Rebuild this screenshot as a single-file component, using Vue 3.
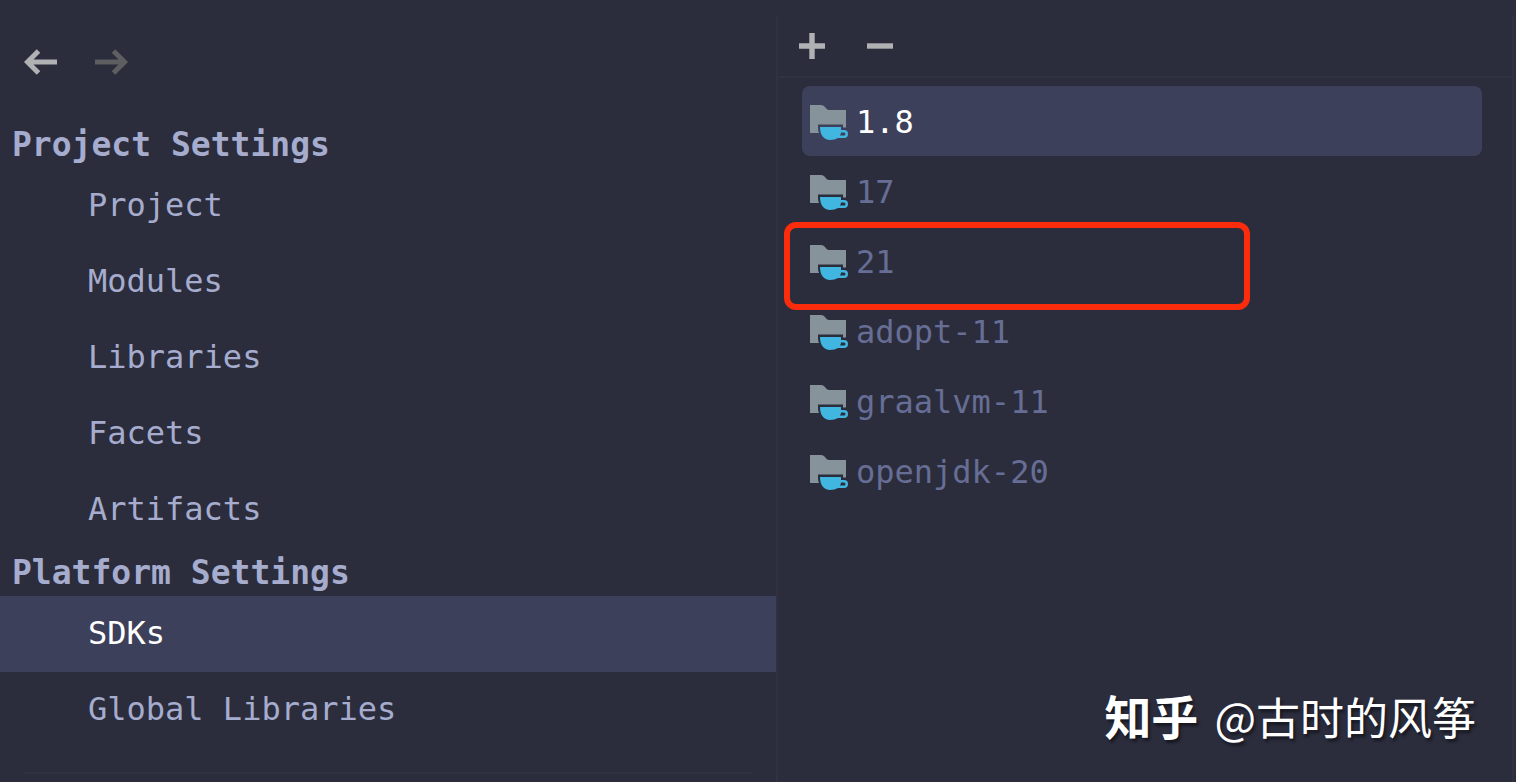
<template>
  <div class="structure-dialog">
    <aside class="sidebar">
      <div class="history">
        <button type="button" class="icon-btn" aria-label="Back">
          <svg width="34" height="26" viewBox="0 0 34 26">
            <path d="M14.5 2 L3.5 13 L14.5 24 M4 13 H33" fill="none" stroke="#afb1b3" stroke-width="5" />
          </svg>
        </button>
        <button type="button" class="icon-btn" aria-label="Forward" disabled>
          <svg width="34" height="26" viewBox="0 0 34 26">
            <path d="M19.5 2 L30.5 13 L19.5 24 M30 13 H1" fill="none" stroke="#5d5e60" stroke-width="5" />
          </svg>
        </button>
      </div>

      <nav class="sections">
        <div v-for="section in sections" :key="section.title" class="section">
          <h2 class="section-title">{{ section.title }}</h2>
          <a
            v-for="item in section.items"
            :key="item"
            href="#"
            class="nav-item"
            :class="{ active: activeItem === item }"
            @click.prevent="activeItem = item"
          >{{ item }}</a>
        </div>
      </nav>

      <div class="sidebar-footer"></div>
    </aside>

    <main class="content">
      <div class="toolbar">
        <button type="button" class="icon-btn" aria-label="Add">
          <svg width="26" height="26" viewBox="0 0 26 26">
            <path d="M0 13 H26 M13 0 V26" stroke="#afb1b3" stroke-width="5.4" />
          </svg>
        </button>
        <button type="button" class="icon-btn" aria-label="Remove">
          <svg width="26" height="26" viewBox="0 0 26 26">
            <path d="M0 13 H26" stroke="#afb1b3" stroke-width="5.4" />
          </svg>
        </button>
      </div>

      <ul class="sdk-list">
        <li v-for="sdk in sdks" :key="sdk" class="sdk-row">
          <button
            type="button"
            class="sdk-btn"
            :class="{ active: activeSdk === sdk }"
            @click="activeSdk = sdk"
          >
            <svg class="sdk-icon" width="40" height="36" viewBox="0 0 40 36">
              <path d="M2 1 H13 C17 1 18 6 21 6 H38 V23.5 H35 V20.5 H10 V24 Q10 27 11 29 H2 Z" fill="#87939a" />
              <path
                d="M12 23 H33 V26 H36 Q40 26 40 30 Q40 34 36 34 H30 Q27 36 22 36 C16 36 12 31 12 23 Z M33 28.5 Q33 30 32 31.5 H36 Q37.5 31.5 37.5 30 Q37.5 28.5 36 28.5 Z"
                fill="#40b6e0"
                fill-rule="evenodd"
              />
            </svg>
            <span>{{ sdk }}</span>
          </button>
          <span v-if="sdk === markedSdk" class="mark"></span>
        </li>
      </ul>
    </main>

    <div class="watermark">
      <span class="watermark-brand">知乎</span>
      <span>@古时的风筝</span>
    </div>
  </div>
</template>

<script setup>
import { ref } from 'vue'

const sections = [
  {
    title: 'Project Settings',
    items: ['Project', 'Modules', 'Libraries', 'Facets', 'Artifacts']
  },
  {
    title: 'Platform Settings',
    items: ['SDKs', 'Global Libraries']
  }
]

const sdks = ['1.8', '17', '21', 'adopt-11', 'graalvm-11', 'openjdk-20']

const activeItem = ref('SDKs')
const activeSdk = ref('1.8')

// SDK outlined in red
const markedSdk = '21'
</script>

<style>
body {
  margin: 0;
  background: #2b2d3d;
}
</style>

<style scoped>
.structure-dialog {
  position: relative;
  display: grid;
  grid-template-columns: 776fr 740fr;
  min-height: 100vh;
  box-sizing: border-box;
  padding-top: 16px;
  background: #2b2d3d;
  color: #a6accd;
  font-family: "DejaVu Sans Mono", monospace;
  font-size: 32px;
  line-height: 40px;
}

.sidebar {
  display: flex;
  flex-direction: column;
  min-width: 0;
}

.history {
  display: flex;
  align-items: center;
  gap: 36px;
  height: 92px;
  padding: 0 24px;
  margin-bottom: 12px;
}

.icon-btn {
  display: flex;
  padding: 0;
  border: none;
  background: none;
  cursor: pointer;
}

.icon-btn:disabled {
  cursor: default;
}

.section-title {
  margin: 0;
  padding: 2px 12px 0;
  font-size: 33px;
  font-weight: 700;
  line-height: 46px;
}

.nav-item {
  display: block;
  padding: 0 88px 2px;
  line-height: 74px;
  color: inherit;
  text-decoration: none;
}

.nav-item.active {
  background: #3d405a;
  color: #fff;
}

.sidebar-footer {
  height: 8px;
  margin: auto 24px 0;
  border-top: 2px solid #303244;
}

.content {
  min-width: 0;
  margin-right: 2px;
  border-left: 2px solid #303244;
  border-right: 2px solid #303244;
}

.toolbar {
  display: flex;
  align-items: center;
  gap: 42px;
  height: 60px;
  padding: 0 21px;
  border-bottom: 2px solid #303244;
}

.sdk-list {
  margin: 0;
  padding: 8px 30px 0 24px;
  list-style: none;
}

.sdk-row {
  position: relative;
}

.sdk-btn {
  display: flex;
  align-items: center;
  gap: 8px;
  width: 100%;
  height: 70px;
  padding: 2px 6px 0;
  border: none;
  border-radius: 8px;
  background: none;
  color: #676e95;
  font: inherit;
  text-align: left;
  cursor: pointer;
}

.sdk-btn.active {
  background: #3d405a;
  color: #fff;
}

.sdk-icon {
  flex-shrink: 0;
}

/* 红框标注 */
.mark {
  position: absolute;
  top: -4px;
  left: -18px;
  box-sizing: border-box;
  width: 466px;
  height: 88px;
  border: 6px solid #fb2c0b;
  border-radius: 12px;
  pointer-events: none;
}

.watermark {
  position: absolute;
  right: 40px;
  bottom: 34px;
  display: flex;
  align-items: baseline;
  gap: 16px;
  color: #fff;
  font-family: "Noto Sans CJK SC", sans-serif;
  font-size: 44px;
  line-height: 64px;
  text-shadow: 2px 3px 3px rgba(0, 0, 0, 0.5);
}

.watermark-brand {
  font-size: 47px;
  font-weight: 700;
}
</style>
